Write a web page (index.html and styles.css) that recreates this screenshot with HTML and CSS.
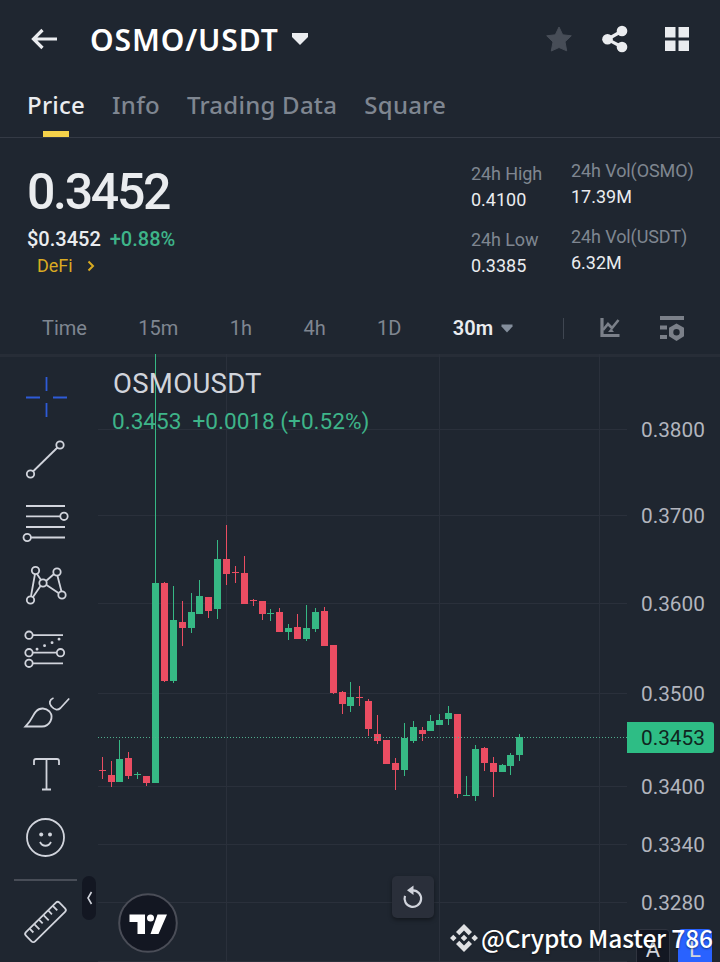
FILE: index.html
```
<!DOCTYPE html>
<html lang="en">
<head>
    <meta charset="UTF-8">
    <meta name="viewport" content="width=device-width, initial-scale=1.0">
    <title>OSMO/USDT</title>
    <link rel="stylesheet" href="styles.css">
</head>
<body>
    <div class="app">
        <header class="header">
            <svg class="back" width="28" height="22" viewBox="0 0 28 22"><path d="M12.5 2L3.500 11l9 9M4 11h23" fill="none" stroke="#eaecef" stroke-width="3.2"/></svg>
            <h1 class="pair">OSMO/USDT</h1>
            <svg class="caret" width="18" height="14" viewBox="0 0 18 14"><path d="M1 1h16v4L9 13 1 5z" fill="#eaecef"/></svg>
            <div class="actions">
                <svg width="28" height="28" viewBox="0 0 28 28"><path d="M14 2l3.700 7.800 8.600 1-6.300 6 1.700 9L14 22.500 6.300 26 8 17l-6.300-6.200 8.600-1z" fill="#474d57" stroke="#474d57" stroke-linejoin="round"/></svg>
                <svg width="28" height="28" viewBox="0 0 28 28"><path d="M21 6L6.500 14.300 21 22" fill="none" stroke="#eaecef" stroke-width="3.200"/><g fill="#eaecef"><circle cx="21" cy="6" r="5.300"/><circle cx="6.500" cy="14.300" r="5.300"/><circle cx="21" cy="22" r="5.300"/></g></svg>
                <svg width="28" height="28" viewBox="0 0 28 28" fill="#eaecef"><path d="M2 2h10.500v10.500H2zM15.500 2H26v10.500H15.500zM2 15.500h10.500V26H2zM15.500 15.500H26V26H15.500z"/></svg>
            </div>
        </header>

        <nav class="tabs">
            <span class="tab active">Price</span>
            <span class="tab">Info</span>
            <span class="tab">Trading Data</span>
            <span class="tab">Square</span>
        </nav>

        <section class="summary">
            <div class="quote">
                <div class="last">0.3452</div>
                <div class="fiat"><span>$0.3452</span><span class="up">+0.88%</span></div>
                <div class="tag">DeFi <svg width="8" height="12" viewBox="0 0 8 12"><path d="M1.500 1.500L6 6l-4.500 4.500" fill="none" stroke="#d9ab22" stroke-width="2"/></svg></div>
            </div>
            <div class="stats">
                <div class="stat"><span class="label">24h High</span><span class="value">0.4100</span></div>
                <div class="stat"><span class="label">24h Low</span><span class="value">0.3385</span></div>
            </div>
            <div class="stats volume">
                <div class="stat"><span class="label">24h Vol(OSMO)</span><span class="value">17.39M</span></div>
                <div class="stat"><span class="label">24h Vol(USDT)</span><span class="value">6.32M</span></div>
            </div>
        </section>

        <nav class="intervals">
            <span class="interval">Time</span>
            <span class="interval">15m</span>
            <span class="interval">1h</span>
            <span class="interval">4h</span>
            <span class="interval">1D</span>
            <span class="interval active">30m <svg width="12" height="9" viewBox="0 0 12 9"><path d="M.5.500h11v2L6 8.500.5 2.500z" fill="#848e9c"/></svg></span>
            <span class="separator"></span>
            <svg class="indicator" width="20" height="20" viewBox="0 0 20 20" fill="none" stroke="#7b8089"><path d="M2 0v17.500h17.500" stroke-width="3.200"/><path d="M3 12l5-6 4 4 6.500-8" stroke-width="2.600"/><path d="M8 14l3-3.500 3 3.500z" fill="#7b8089" stroke="none"/></svg>
            <svg class="settings" width="26" height="26" viewBox="0 0 26 26" fill="#7b8089"><path d="M1 1h24v4H1zM1 10.500h7v4H1zM1 20h7v4H1z"/><path fill-rule="evenodd" d="M17.500 8.500l7.500 4.200v8.600L17.500 26 10 21.300v-8.600zM17.500 14a3.200 3.200 0 1 0 0 6.400 3.200 3.200 0 0 0 0-6.400z"/></svg>
        </nav>

        <main class="chart">
            <aside class="tools">
                <svg class="tool cursor" viewBox="0 0 48 63"><path d="M4 31.500h14M31 31.500h14M24.500 11v14M24.500 37v14"/></svg>
                <svg class="tool" viewBox="0 0 48 63"><path d="M11 42.500l24.500-24"/><circle cx="38" cy="16" r="3.700"/><circle cx="8.500" cy="45" r="3.700"/></svg>
                <svg class="tool" viewBox="0 0 48 63"><path d="M4 14h39M4 24.300h34M4 35h39M9 45.500h34"/><circle cx="42" cy="24.300" r="3.700"/><circle cx="5.200" cy="45.500" r="3.700"/></svg>
                <svg class="tool" viewBox="0 0 48 63"><path d="M13 19L9 41M15 19l4 6M24 26l8-7M35.500 21l4 15.500M24.500 30l12 8M18.500 31l-7.500 11"/><circle cx="13.500" cy="15.500" r="3.700"/><circle cx="35" cy="17" r="3.700"/><circle cx="21" cy="28" r="3.700"/><circle cx="8.500" cy="45" r="3.700"/><circle cx="40" cy="40" r="3.700"/></svg>
                <svg class="tool" viewBox="0 0 48 63"><path d="M11 17.200h30M11 34.700h23.500M11 45.300h30"/><path d="M15 31.200h.1M22.500 27.700h.1M30 24.700h.1M37 21.200h.1" stroke-width="2.800" stroke-linecap="round"/><circle cx="7" cy="17.200" r="3.700"/><circle cx="7" cy="34.700" r="3.700"/><circle cx="38.500" cy="34.700" r="3.700"/><circle cx="7" cy="45.300" r="3.700"/></svg>
                <svg class="tool" viewBox="0 0 48 63"><path d="M3.500 45.500C11 38 10.500 34 14 30.500c4-4.500 10-3.500 13.500 0 5 6 0 15-7.500 15zM31.500 17c-4 1.500-5 5.500-2 8.500 3.500 4 6.500 4 9 1.500l8.700-9.500"/></svg>
                <svg class="tool" viewBox="0 0 48 63"><path d="M12 21v-4q0-2 2-2h21q2 0 2 2v4M24.500 15v30.500M20 45.500h9"/></svg>
                <svg class="tool" viewBox="0 0 48 63"><circle cx="23.500" cy="30.500" r="18.500"/><path d="M18 35c2.500 5 8.500 5 11 0"/><g fill="#d1d4dc" stroke="none"><circle cx="19.200" cy="27.500" r="2"/><circle cx="28" cy="27.500" r="2"/></g></svg>
                <div class="rule"></div>
                <svg class="tool" viewBox="0 0 48 63"><g transform="rotate(-44.500 23.500 31)"><rect x="0" y="24.500" width="47" height="13" rx="2.500"/><path d="M7.500 25v5M14 25v7M20.500 25v5M27 25v7M33.500 25v5M40 25v6"/></g></svg>
            </aside>

            <div class="plot">
                <svg class="canvas" viewBox="98 354 622 608">
                    <g id="grid" class="grid"></g>
                    <g id="candles"></g>
                    <path class="last-line" d="M98 737.500h529"/>
                    <g id="axis" class="axis"></g>
                    <path d="M627 722h84q3 0 3 3v25q0 3-3 3h-84z" fill="#2ebd85"/>
                    <text class="last-label" x="641" y="745">0.3453</text>
                </svg>
                <div class="legend">
                    <div class="symbol">OSMOUSDT</div>
                    <div class="change"><span>0.3453</span><span>+0.0018 (+0.52%)</span></div>
                </div>
                <svg class="tv" width="60" height="60" viewBox="0 0 60 60"><circle cx="30" cy="30" r="28.800" fill="#131722" stroke="#4a4d57" stroke-width="2"/><path d="M11.500 21.500H27V41h-7.500V29h-8zM39.500 21.500h9.500L40.500 41h-8z" fill="#fff"/><circle cx="32.500" cy="25" r="3.500" fill="#fff"/></svg>
                <div class="reset"><svg width="22" height="24" viewBox="0 0 22 24"><path d="M3 10.800A8.300 8.300 0 1 0 11 5.300H8" fill="none" stroke="#d1d4dc" stroke-width="2.200"/><path d="M11.500.5v9.500L5 5.300z" fill="#d1d4dc"/></svg></div>
                <div class="scale"><span>A</span><span class="on">L</span></div>
            </div>

            <div class="handle"><svg width="7" height="14" viewBox="0 0 7 14"><path d="M5.500 1L2 7l3.500 6" fill="none" stroke="#d1d4dc" stroke-width="1.600"/></svg></div>
            <div class="watermark">
                <svg width="28" height="28" viewBox="0 0 28 28" fill="#e0e1e3"><path d="M14 0l8 8-3.300 3.200L14 6.500l-4.700 4.700L6 8zM14 28l-8-8 3.300-3.200 4.700 4.700 4.700-4.700L22 20zM14 10.700l3.300 3.300-3.300 3.300-3.300-3.300zM3.300 10.700L6.600 14l-3.300 3.300L0 14zM24.700 10.700L28 14l-3.300 3.300-3.300-3.300z"/></svg>
                <span>@Crypto Master 786</span>
            </div>
        </main>
    </div>
    <script src="script.js"></script>
</body>
</html>
```

FILE: styles.css
```
* {
    box-sizing: border-box;
}

body {
    margin: 0;
    background: #1f2630;
    color: #eaecef;
    font-family: Roboto, "Liberation Sans", sans-serif;
}

svg {
    display: block;
    flex: none;
}

.app {
    width: 720px;
    height: 962px;
    display: flex;
    flex-direction: column;
    overflow: hidden;
}

.app > * {
    flex: none;
}

.header {
    height: 77px;
    display: flex;
    align-items: center;
    padding: 0 29px 0 30px;
}

.pair {
    margin: 2px 0 0 32px;
    width: 188px;
    white-space: nowrap;
    color: #fff;
    font: 600 30px "Noto Sans", sans-serif;
    letter-spacing: 0.9px;
}

.caret {
    margin-left: 13px;
}

.actions {
    display: flex;
    margin-left: auto;
}

.actions svg + svg {
    margin-left: 28px;
}

.actions svg:last-child {
    margin-left: 34px;
}

.tabs {
    height: 61px;
    display: flex;
    gap: 27px;
    padding: 11px 27px 0;
    border-bottom: 1px solid #343a45;
    font: 500 24px/34px "Noto Sans", sans-serif;
    letter-spacing: 0.25px;
    color: #7f8691;
}

.tab {
    white-space: nowrap;
}

.tab.active {
    color: #eaecef;
}

.tab.active::after {
    content: "";
    display: block;
    width: 26px;
    height: 6px;
    margin: 9px auto 0;
    background: #f5d24a;
}

.summary {
    height: 164px;
    display: flex;
    padding-left: 27px;
}

.quote {
    width: 444px;
    padding-top: 24px;
}

.last {
    font-size: 50px;
    font-weight: 500;
    line-height: 60px;
    letter-spacing: -2.3px;
}

.fiat {
    display: flex;
    gap: 9px;
    font-size: 20px;
    font-weight: 500;
    line-height: 34px;
}

.up {
    color: #3eb489;
}

.tag {
    display: flex;
    align-items: center;
    gap: 14px;
    margin-left: 10px;
    font-size: 18px;
    line-height: 20px;
    color: #d9ab22;
}

.stats {
    width: 100px;
    padding-top: 23px;
}

.volume {
    padding-top: 20px;
}

.stat {
    display: flex;
    flex-direction: column;
    height: 66px;
    line-height: 26px;
    font-size: 18px;
    white-space: nowrap;
}

.label {
    color: #7f8691;
    letter-spacing: -0.1px;
}

.intervals {
    height: 55px;
    display: flex;
    align-items: center;
    padding-left: 42px;
    border-bottom: 3px solid #272d37;
    font-size: 20px;
    color: #7f8691;
}

.interval {
    margin-right: 51.4px;
}

.interval.active {
    display: flex;
    align-items: center;
    gap: 8px;
    margin-right: 50px;
    color: #eaecef;
    font-weight: 600;
}

.separator {
    width: 1px;
    height: 21px;
    background: #3f4651;
}

.indicator {
    margin-left: 36px;
}

.settings {
    margin-left: 39px;
}

/* the 15m wick runs up over the divider */
.chart {
    position: relative;
    height: 608px;
    margin-top: -3px;
    display: flex;
}

.tools {
    width: 98px;
    padding: 12px 0 0 22px;
}

.tool {
    width: 48px;
    height: 63px;
    fill: none;
    stroke: #d1d4dc;
    stroke-width: 1.8;
}

.cursor {
    stroke: #2e5bd7;
}

.rule {
    width: 63px;
    height: 2px;
    margin: 9px 0 10px -8px;
    background: #484d57;
}

.plot {
    position: relative;
    width: 622px;
}

.canvas {
    width: 622px;
    height: 608px;
}

.grid {
    stroke: #2a303b;
    stroke-width: 1;
}

.axis,
.last-label {
    font-size: 20.8px;
    fill: #b2b5be;
}

.last-label {
    fill: #10251f;
}

.last-line {
    stroke: #4fae8d;
    stroke-dasharray: 1 2;
}

.rise {
    fill: #36b884;
}

.fall {
    fill: #ea4d62;
}

.legend {
    position: absolute;
    left: 14px;
    top: 13px;
}

.symbol {
    font-size: 27.5px;
    line-height: 34px;
    margin-left: 1px;
    letter-spacing: 0.3px;
    color: #d1d4dc;
}

.change {
    display: flex;
    gap: 11px;
    font-size: 22.6px;
    line-height: 41px;
    color: #3eb489;
}

.tv {
    position: absolute;
    left: 20px;
    top: 539px;
}

.reset {
    position: absolute;
    left: 294px;
    top: 522px;
    width: 42px;
    height: 42px;
    display: flex;
    align-items: center;
    justify-content: center;
    border-radius: 5px;
    background: #2a2f3a;
    box-shadow: 0 2px 4px rgba(0, 0, 0, 0.4);
}

.scale {
    position: absolute;
    left: 538px;
    top: 575px;
    height: 33px;
    display: flex;
    gap: 8px;
    overflow: hidden;
}

.scale span {
    width: 34px;
    height: 40px;
    border: 1px solid #30343f;
    border-radius: 4px;
    background: #131722;
    color: #d1d4dc;
    font-size: 22px;
    line-height: 39px;
    text-align: center;
}

.scale .on {
    border-color: #2962ff;
    background: #2962ff;
}

.handle {
    position: absolute;
    left: 82px;
    top: 522px;
    width: 14px;
    height: 44px;
    display: flex;
    align-items: center;
    justify-content: center;
    border-radius: 7px;
    background: #131722;
}

.watermark {
    position: absolute;
    left: 450px;
    top: 564px;
    display: flex;
    align-items: center;
    gap: 3px;
    color: #fff;
    font: 500 24.5px/40px "Noto Sans CJK SC", sans-serif;
    letter-spacing: -0.15px;
    white-space: nowrap;
    text-shadow: 0 1px 2px rgba(0, 0, 0, 0.5);
}
```

FILE: script.js
```
const NS = 'http://www.w3.org/2000/svg';

function add(parent, tag, attrs, text) {
    const el = document.createElementNS(NS, tag);
    for (const key in attrs) {
        el.setAttribute(key, attrs[key]);
    }
    if (text) {
        el.textContent = text;
    }
    document.getElementById(parent).appendChild(el);
}

const levels = [
    ['0.3800', 429.5], ['0.3700', 515.5], ['0.3600', 603.5], ['0.3500', 693.5],
    ['0.3400', 786.5], ['0.3340', 844.5], ['0.3280', 902.5]
];

levels.forEach(([label, y]) => {
    add('grid', 'path', { d: `M98 ${y}h529` });
    add('axis', 'text', { x: 641, y: y + 7.5 }, label);
});
add('grid', 'path', { d: 'M98 961.5h529' });
[226.5, 439.5, 599.5].forEach(x => add('grid', 'path', { d: `M${x} 354v608` }));

// x, high, body top, body bottom, low, rising
const candles = [
    [102.5, 757, 770, 771, 779, 0], [111.5, 761, 775, 782, 787, 0], [119.5, 740, 759, 782, 782, 1],
    [128.5, 752, 758, 776, 779, 0], [137.5, 772, 774, 775, 779, 1], [146.5, 776, 776, 783, 786, 0],
    [155.5, 354, 583, 783, 783, 1], [164.5, 582, 583, 681, 682, 0], [173.5, 586, 620, 681, 683, 1],
    [182.5, 601, 622, 628, 646, 0], [191.5, 593, 612, 628, 633, 1], [199.5, 580, 596, 614, 614, 1],
    [208.5, 597, 597, 611, 618, 0], [217.5, 540, 559, 609, 619, 1], [226.5, 525, 559, 574, 585, 0],
    [235.5, 566, 572, 573, 583, 0], [244.5, 556, 573, 604, 604, 0], [253.5, 599, 600, 601, 606, 0],
    [262.5, 601, 601, 614, 620, 0], [270.5, 609, 613, 614, 621, 1], [279.5, 608, 612, 632, 632, 0],
    [288.5, 624, 628, 632, 640, 1], [297.5, 614, 627, 639, 639, 0], [306.5, 605, 628, 639, 641, 1],
    [315.5, 608, 612, 629, 632, 1], [324.5, 607, 611, 646, 646, 0], [333.5, 645, 645, 693, 694, 0],
    [342.5, 691, 692, 704, 714, 0], [350.5, 682, 697, 706, 712, 1], [359.5, 686, 697, 698, 706, 0],
    [368.5, 699, 701, 729, 736, 0], [377.5, 715, 734, 741, 744, 0], [386.5, 740, 740, 764, 764, 0],
    [395.5, 758, 763, 770, 790, 0], [404.5, 723, 738, 770, 776, 1], [413.5, 721, 727, 741, 743, 1],
    [422.5, 727, 730, 734, 741, 0], [430.5, 715, 721, 731, 731, 1], [439.5, 714, 720, 725, 725, 1],
    [448.5, 706, 713, 719, 725, 1], [457.5, 714, 714, 794, 798, 0], [466.5, 776, 795, 796, 796, 1],
    [475.5, 745, 749, 796, 801, 1], [484.5, 747, 748, 763, 771, 0], [493.5, 757, 763, 772, 797, 0],
    [502.5, 764, 765, 772, 772, 1], [510.5, 753, 755, 766, 775, 1], [519.5, 734, 737, 755, 761, 1]
];

candles.forEach(([x, high, top, bottom, low, rising]) => {
    const cls = rising ? 'rise' : 'fall';
    add('candles', 'rect', { class: cls, x: x - 0.5, y: high, width: 1, height: low - high });
    add('candles', 'rect', { class: cls, x: x - 3.5, y: top, width: 7, height: bottom - top });
});
```
